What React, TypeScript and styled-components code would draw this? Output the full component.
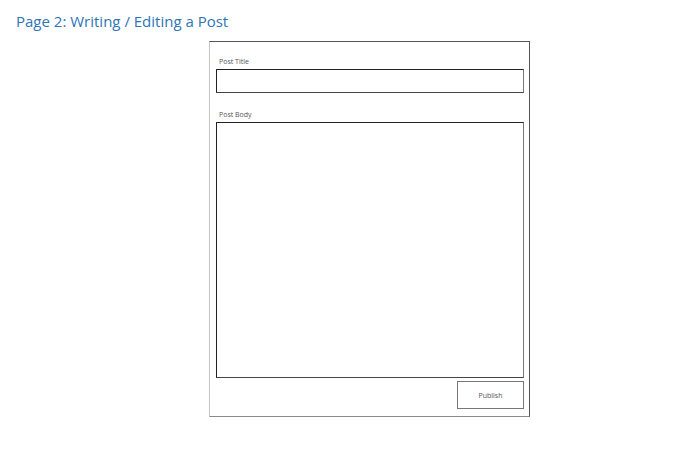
import React from 'react';
import styled, { createGlobalStyle } from 'styled-components';

const GlobalStyle = createGlobalStyle`
  body {
    margin: 0;
    background: #fff;
    font-family: 'Open Sans', 'Liberation Sans', sans-serif;
  }
`;

const Page = styled.div`
  width: 674px;
  height: 455px;
  padding: 11px 0 0 16px;
  box-sizing: border-box;
`;

const Heading = styled.h1`
  margin: 0;
  font-family: 'Open Sans', sans-serif;
  font-weight: 400;
  font-size: 15px;
  line-height: 20px;
  color: #2e75b6;
`;

const Panel = styled.div`
  margin: 10px 0 0 193px;
  width: 321px;
  height: 376px;
  box-sizing: border-box;
  border: 1px solid #555;
  border-left-color: #c4c4c4;
  border-bottom-color: #8a8a8a;
  padding: 12px 5px 7px 6px;
  display: flex;
  flex-direction: column;
`;

const Label = styled.label`
  font-size: 7px;
  line-height: 10px;
  color: #555;
  padding: 3px 0 0 3px;
  margin-bottom: 2px;
`;

const Field = styled.div<{ $grow?: boolean }>`
  box-sizing: border-box;
  border: 1px solid #222;
  border-right-color: #777;
  border-bottom-color: #444;
  height: ${(p) => (p.$grow ? '256px' : '24px')};
  margin-bottom: ${(p) => (p.$grow ? '3px' : '14px')};
`;

const Footer = styled.div`
  display: flex;
  justify-content: flex-end;
`;

const Button = styled.button`
  width: 67px;
  height: 28px;
  box-sizing: border-box;
  background: #fff;
  border: 1px solid #777;
  font-family: 'Open Sans', sans-serif;
  font-size: 7px;
  color: #555;
  padding: 0;
`;

export default function App() {
  return (
    <Page>
      <GlobalStyle />
      <Heading>Page 2: Writing / Editing a Post</Heading>
      <Panel>
        <Label>Post Title</Label>
        <Field />
        <Label>Post Body</Label>
        <Field $grow />
        <Footer>
          <Button>Publish</Button>
        </Footer>
      </Panel>
    </Page>
  );
}
